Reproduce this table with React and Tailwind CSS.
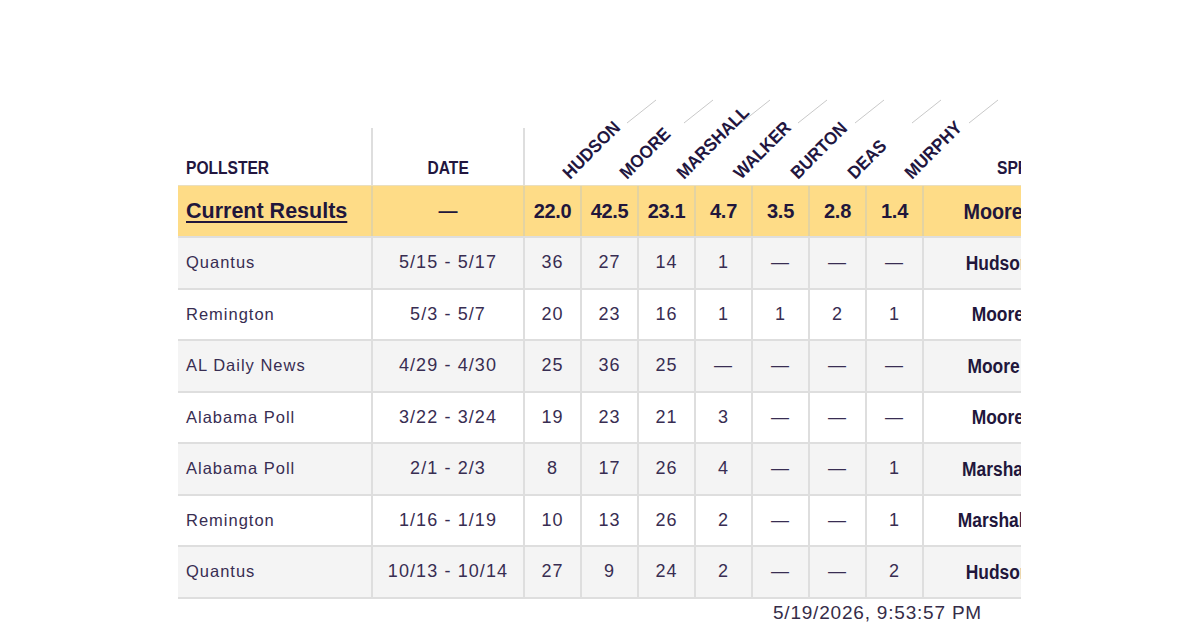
import React from "react";

const candidates = ["HUDSON", "MOORE", "MARSHALL", "WALKER", "BURTON", "DEAS", "MURPHY"];

const current = ["22.0", "42.5", "23.1", "4.7", "3.5", "2.8", "1.4"];

const polls = [
  { name: "Quantus", date: "5/15 - 5/17", vals: ["36", "27", "14", "1", "—", "—", "—"], spread: "Hudson +9" },
  { name: "Remington", date: "5/3 - 5/7", vals: ["20", "23", "16", "1", "1", "2", "1"], spread: "Moore +3" },
  { name: "AL Daily News", date: "4/29 - 4/30", vals: ["25", "36", "25", "—", "—", "—", "—"], spread: "Moore +11" },
  { name: "Alabama Poll", date: "3/22 - 3/24", vals: ["19", "23", "21", "3", "—", "—", "—"], spread: "Moore +2" },
  { name: "Alabama Poll", date: "2/1 - 2/3", vals: ["8", "17", "26", "4", "—", "—", "1"], spread: "Marshall +9" },
  { name: "Remington", date: "1/16 - 1/19", vals: ["10", "13", "26", "2", "—", "—", "1"], spread: "Marshall +13" },
  { name: "Quantus", date: "10/13 - 10/14", vals: ["27", "9", "24", "2", "—", "—", "2"], spread: "Hudson +3" },
];

const cols = "grid grid-cols-[195px_152px_repeat(7,57px)_172px]";

const App = () => {
  return (
    <div className="w-[1200px] h-[630px] bg-white overflow-hidden font-['Liberation_Sans',Arial,sans-serif]">
      <div className="ml-[178px] mt-[95px] w-[843px] overflow-hidden">
        {/* Header */}
        <div className={`${cols} h-[90px] text-[#22163f] font-bold`}>
          <div className="flex items-end">
            <div className="h-[57px] w-full border-r-2 border-[#dedede] flex items-end pb-[8px] pl-[8px] text-[19px] leading-none">
              <span className="inline-block scale-x-[0.82] origin-left">POLLSTER</span>
            </div>
          </div>
          <div className="flex items-end">
            <div className="h-[57px] w-full border-r-2 border-[#dedede] flex items-end justify-center pb-[8px] text-[19px] leading-none">
              <span className="inline-block scale-x-[0.82]">DATE</span>
            </div>
          </div>
          {candidates.map((c) => (
            <div key={c} className="relative">
              <svg className="absolute left-0 top-0 overflow-visible" width="140" height="40">
                <line x1="102" y1="28" x2="131" y2="5" stroke="#c9c9c9" strokeWidth="1" />
              </svg>
              <span className="absolute left-[47px] bottom-[3px] origin-bottom-left -rotate-45 scale-x-[0.93] whitespace-nowrap text-[18px] leading-none">
                {c}
              </span>
            </div>
          ))}
          <div className="flex items-end pb-[8px] pl-[73px] text-[19px] leading-none">
            <span className="inline-block scale-x-[0.82] origin-left">SPREAD</span>
          </div>
        </div>

        {/* Current results */}
        <div className={`${cols} h-[51px] bg-[#fedc87] border-t border-[#eadfbf] text-[#21163b] font-bold`}>
          <div className="border-r-2 border-[#e3d3a2] flex items-center pl-[8px]">
            <span className="text-[21.5px] underline underline-offset-[3px] decoration-2">Current Results</span>
          </div>
          <div className="border-r-2 border-[#e3d3a2] flex items-center justify-center text-[19px]">—</div>
          {current.map((v, i) => (
            <div key={i} className="border-r-2 border-[#e3d3a2] flex items-center justify-center text-[20px] tracking-[-0.3px]">
              {v}
            </div>
          ))}
          <div className="flex items-center justify-center pl-[22px] text-[22px] whitespace-nowrap">
            <span className="inline-block scale-x-[0.9]">Moore +19.4</span>
          </div>
        </div>

        {/* Poll rows */}
        {polls.map((p, r) => (
          <div
            key={r}
            className={`${cols} h-[51.5px] border-t-2 border-[#dedede] text-[#382d52] ${r % 2 === 0 ? "bg-[#f4f4f4]" : "bg-white"}`}
          >
            <div className="border-r-2 border-[#dedede] flex items-center pl-[8px] text-[16.5px] tracking-[1px]">
              {p.name}
            </div>
            <div className="border-r-2 border-[#dedede] flex items-center justify-center text-[18px] tracking-[1.1px]">
              {p.date}
            </div>
            {p.vals.map((v, i) => (
              <div key={i} className="border-r-2 border-[#dedede] flex items-center justify-center text-[18px] tracking-[1.1px]">
                {v}
              </div>
            ))}
            <div className="flex items-center justify-center text-[20px] font-bold text-[#21163b] whitespace-nowrap">
              <span className="inline-block scale-x-[0.87]">{p.spread}</span>
            </div>
          </div>
        ))}
        <div className="border-t-2 border-[#dedede]" />

        <div className="flex justify-end pr-[39px] text-[19px] tracking-[0.8px] text-[#352c48]">
          5/19/2026, 9:53:57 PM
        </div>
      </div>
    </div>
  );
};

export default App;
